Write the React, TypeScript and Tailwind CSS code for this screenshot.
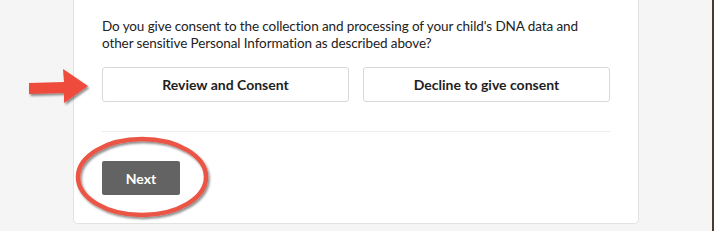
import React from "react";

export default function App() {
  return (
    <div className="relative w-[714px] h-[231px] overflow-hidden bg-[#f5f5f5] flex" style={{ fontFamily: "Lato, 'Open Sans', sans-serif" }}>
      <div className="ml-[73px] w-[566px] h-[224px] bg-white border-x border-b border-[#e2e2e2] rounded-b-[5px] pl-[28px] pr-[28px] pt-[18px] flex flex-col">
        <p className="text-[13.5px] leading-[17px] tracking-[-0.1px] text-[#222] w-[500px]">
          Do you give consent to the collection and processing of your child's DNA data and other sensitive Personal Information as described above?
        </p>
        <div className="mt-[15px] flex gap-[14px]">
          <button className="w-[247px] h-[35px] border border-[#d8d8d8] rounded-[3px] bg-white text-[14px] font-bold text-[#1e1e1e]">
            Review and Consent
          </button>
          <button className="w-[247px] h-[35px] border border-[#d8d8d8] rounded-[3px] bg-white text-[14px] font-bold text-[#1e1e1e]">
            Decline to give consent
          </button>
        </div>
        <div className="mt-[29px] w-[508px] h-px bg-[#ececec]" />
        <button className="mt-[29px] w-[78px] h-[34px] rounded-[2px] bg-[#636363] text-white text-[14px] font-bold">
          Next
        </button>
      </div>
      <div className="absolute right-0 top-0 w-[2px] h-full bg-[#4a3a2a]" />
      <svg className="absolute left-0 top-0" width="714" height="231" viewBox="0 0 714 231">
        <defs>
          <filter id="sh" x="-20%" y="-20%" width="140%" height="140%">
            <feDropShadow dx="1.5" dy="2" stdDeviation="1.2" floodColor="#000" floodOpacity="0.45" />
          </filter>
        </defs>
        <g filter="url(#sh)">
          <path d="M29 83 L64 82 L63 69 L88 86 L64 103 L64 93 L29 94 Z" fill="#ef4b3d" strokeLinejoin="round" />
          <ellipse cx="142" cy="177" rx="64" ry="38" fill="none" stroke="#ea5445" strokeWidth="4.5" />
        </g>
      </svg>
    </div>
  );
}
